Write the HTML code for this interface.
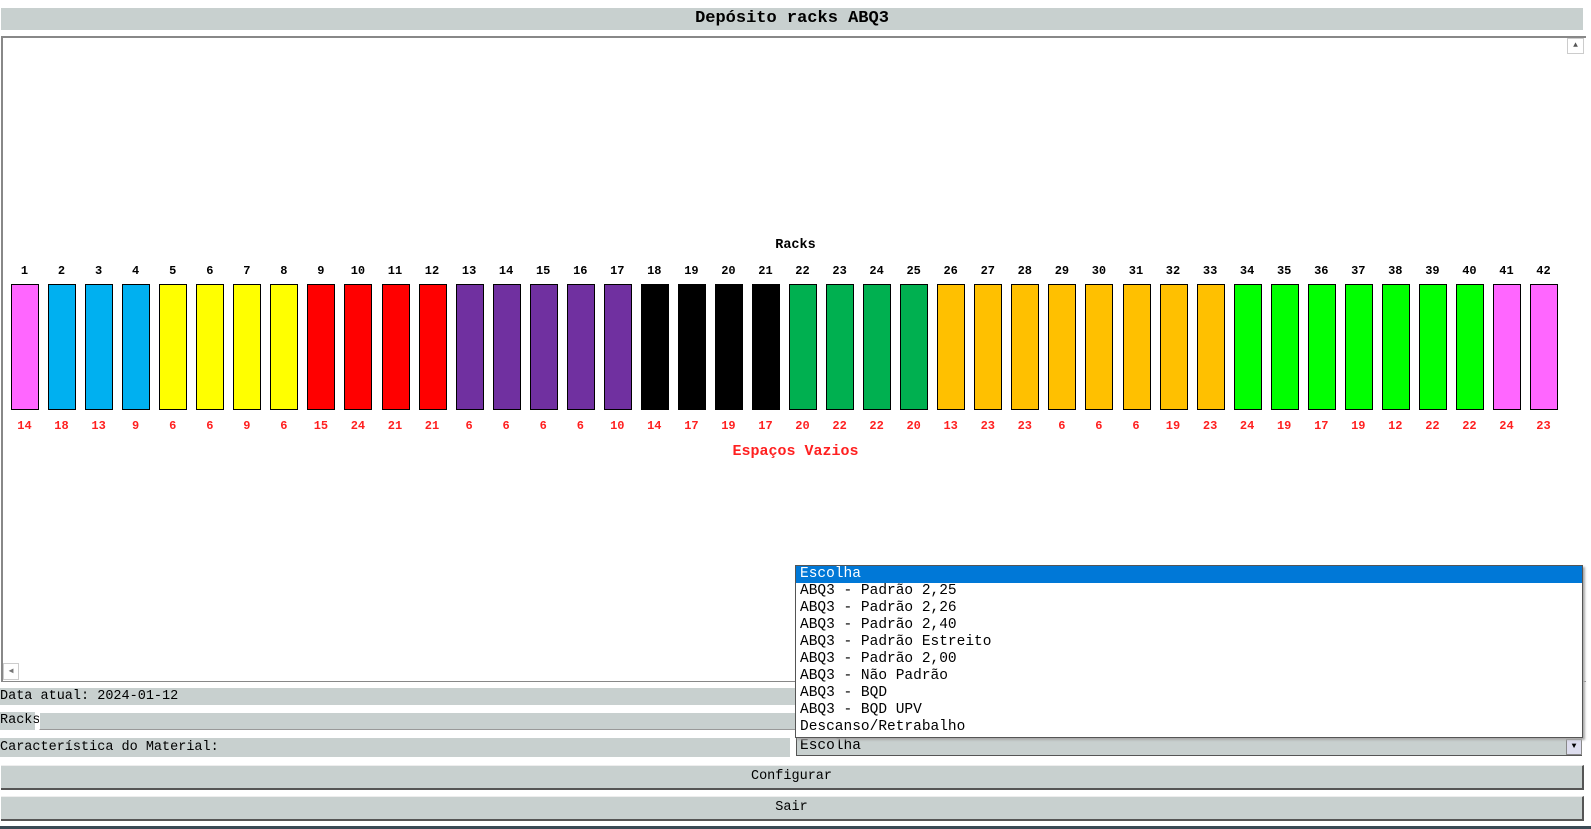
<!DOCTYPE html>
<html><head><meta charset="utf-8"><style>
body{margin:0;width:1591px;height:829px;background:#fff;position:relative;overflow:hidden;font-family:"Liberation Mono",monospace;}
.a{position:absolute;}
.g{background:#c8d0cf;}
.bar{position:absolute;top:284px;width:26px;height:124px;border:1px solid #000;}
.n{position:absolute;top:264px;width:37px;text-align:center;font-size:12px;font-weight:bold;color:#000;}
.m{position:absolute;top:419px;width:37px;text-align:center;font-size:12px;font-weight:bold;color:#ff2020;}
.row{position:absolute;left:0;font-size:13.5px;line-height:17px;}
.opt{height:17px;line-height:17px;padding-left:4px;font-size:14.5px;white-space:pre;}
</style></head><body>
<div class="a g" style="left:1px;top:8px;width:1582px;height:22px;text-align:center;font-weight:bold;font-size:17px;line-height:22px;">Depósito racks ABQ3</div>
<div class="a" style="left:1px;top:36px;width:1583px;height:643px;border-top:2px solid #888;border-left:2px solid #888;border-bottom:1px solid #888;"></div>
<div class="a" style="left:1567px;top:38px;width:15px;height:14px;border:1px solid #ccc;font-size:8px;text-align:center;color:#555;line-height:14px;">▲</div>
<div class="a" style="left:3px;top:663px;width:14px;height:15px;border:1px solid #ccc;font-size:8px;color:#777;line-height:15px;text-align:center;">◀</div>
<div class="a" style="left:0;width:1591px;top:238px;text-align:center;font-size:13.5px;font-weight:bold;">Racks</div>
<div class="a" style="left:0;width:1591px;top:443px;text-align:center;font-size:15px;font-weight:bold;color:#ff2020;">Espaços Vazios</div>
<div id="bars"></div>
<script>
var c=[],cols={p:"#ff66ff",b:"#00b0f0",y:"#ffff00",r:"#ff0000",u:"#7030a0",k:"#000000",g:"#00b050",o:"#ffc000",l:"#00ff00"};
var s="pbbbyyyyrrrruuuuukkkkggggoooooooolllllllpp";
var v=[14,18,13,9,6,6,9,6,15,24,21,21,6,6,6,6,10,14,17,19,17,20,22,22,20,13,23,23,6,6,6,19,23,24,19,17,19,12,22,22,24,23];
var h="";
for(var i=0;i<42;i++){var x=11+i*37.05;
h+='<div class="bar" style="left:'+x.toFixed(1)+'px;background:'+cols[s[i]]+'"></div>';
h+='<div class="n" style="left:'+(x-5).toFixed(1)+'px">'+(i+1)+'</div>';
h+='<div class="m" style="left:'+(x-5).toFixed(1)+'px">'+v[i]+'</div>';}
document.getElementById("bars").innerHTML=h;
</script>
<div class="row g" style="top:688px;width:797px;height:17px;">Data atual: 2024-01-12</div>
<div class="row g" style="top:712px;width:35px;height:18px;line-height:18px;">Racks:</div>
<div class="a g" style="left:39px;top:712px;width:758px;height:16px;border-top:1px solid #fff;border-left:1px solid #fff;border-bottom:1px solid #999;"></div>
<div class="row g" style="top:738px;width:790px;height:19px;line-height:19px;">Característica do Material:</div>
<div class="a g" style="left:796px;top:737px;width:785px;height:17px;border:1px solid #555;font-size:14.5px;line-height:17px;padding-left:3px;box-sizing:border-box;width:786px;height:19px;">Escolha</div>
<div class="a" style="left:1566px;top:739px;width:14px;height:14px;border:1px solid #888;background:#dde;font-size:8px;line-height:14px;text-align:center;">▼</div>
<div class="a g" style="left:1px;top:765px;width:1581px;height:22px;border-right:2px solid #555;border-bottom:2px solid #555;border-top:1px solid #eee;text-align:center;font-size:13.5px;line-height:22px;">Configurar</div>
<div class="a g" style="left:1px;top:796px;width:1581px;height:22px;border-right:2px solid #555;border-bottom:2px solid #555;border-top:1px solid #eee;text-align:center;font-size:13.5px;line-height:22px;">Sair</div>
<div class="a" style="left:0;top:826px;width:1591px;height:3px;background:#3a4a55;"></div>
<div class="a" style="left:795px;top:565px;width:786px;height:171px;background:#fff;border:1px solid #555;box-shadow:2px 2px 2px #aaa;">
<div class="opt" style="background:#0078d7;color:#fff;">Escolha</div>
<div class="opt">ABQ3 - Padrão 2,25</div>
<div class="opt">ABQ3 - Padrão 2,26</div>
<div class="opt">ABQ3 - Padrão 2,40</div>
<div class="opt">ABQ3 - Padrão Estreito</div>
<div class="opt">ABQ3 - Padrão 2,00</div>
<div class="opt">ABQ3 - Não Padrão</div>
<div class="opt">ABQ3 - BQD</div>
<div class="opt">ABQ3 - BQD UPV</div>
<div class="opt">Descanso/Retrabalho</div>
</div>
</body></html>
